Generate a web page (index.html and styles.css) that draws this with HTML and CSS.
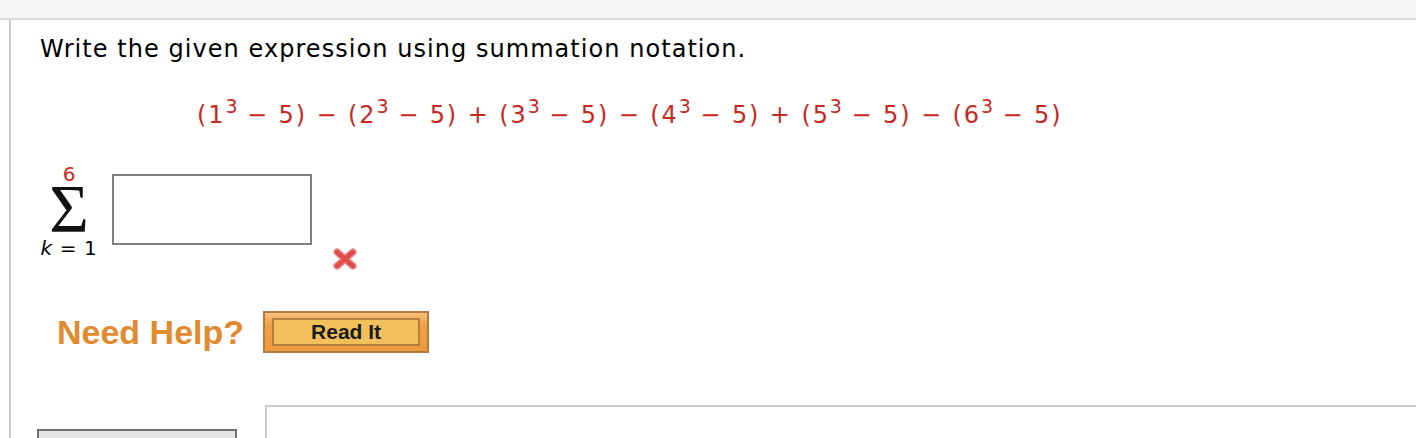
FILE: index.html
```html
<!DOCTYPE html>
<html>
<head>
<meta charset="utf-8">
<link rel="stylesheet" href="styles.css">
</head>
<body>
<div class="topbar"></div>
<div class="main">
  <p class="prompt">Write the given expression using summation notation.</p>
  <div class="expr">(1<sup>3</sup> &minus; 5) &minus; (2<sup>3</sup> &minus; 5) + (3<sup>3</sup> &minus; 5) &minus; (4<sup>3</sup> &minus; 5) + (5<sup>3</sup> &minus; 5) &minus; (6<sup>3</sup> &minus; 5)</div>
  <div class="answer-row">
    <div class="sigma">
      <span class="upper">6</span>
      <span class="sym">&Sigma;</span>
      <span class="lower"><i>k</i> = 1</span>
    </div>
    <div class="box"></div>
    <svg class="wrong" width="26" height="24" viewBox="0 0 26 24">
      <path d="M5 5 L21 19 M21 5 L5 19" stroke="#ec7b7b" stroke-width="7" stroke-linecap="round"/>
      <path d="M5 5 L21 19 M21 5 L5 19" stroke="#e04a4a" stroke-width="4" stroke-linecap="round"/>
    </svg>
  </div>
  <div class="help">
    <span class="need">Need Help?</span>
    <div class="btn"><div class="btn-inner">Read It</div></div>
  </div>
  <div class="bottom">
    <div class="graybox"></div>
    <div class="panel"></div>
  </div>
</div>
</body>
</html>
```
FILE: styles.css
```css
html, body {
  margin: 0;
  padding: 0;
  background: #ffffff;
  overflow: hidden;
}
body {
  width: 1416px;
  height: 438px;
  font-family: "DejaVu Sans", Verdana, sans-serif;
}
.topbar {
  height: 18px;
  background: #f6f6f6;
  border-bottom: 2px solid #dddddd;
}
.main {
  margin-left: 9px;
  border-left: 2px solid #cccccc;
  padding-left: 29px;
  height: 418px;
  overflow: hidden;
}
.prompt {
  margin: 0;
  padding-top: 15px;
  font-size: 24px;
  line-height: 28px;
  letter-spacing: 1.05px;
  color: #000;
  white-space: nowrap;
}
.expr {
  margin-top: 37px;
  padding-left: 157px;
  font-size: 24px;
  line-height: 30px;
  letter-spacing: 1.9px;
  color: #c8281e;
  white-space: nowrap;
}
.expr sup {
  font-size: 19px;
  line-height: 0;
  vertical-align: 10px;
  letter-spacing: 0;
}
.answer-row {
  display: flex;
  align-items: flex-start;
  margin-top: 35px;
  height: 146px;
}
.sigma {
  display: flex;
  flex-direction: column;
  align-items: center;
  width: 58px;
}
.upper {
  color: #c8281e;
  font-size: 20px;
  line-height: 18px;
  height: 18px;
}
.sym {
  font-family: "Liberation Serif", "Times New Roman", serif;
  font-size: 68px;
  line-height: 46px;
  height: 46px;
  margin-top: 2px;
  color: #111;
}
.lower {
  margin-top: 7px;
  font-size: 20px;
  line-height: 20px;
  color: #000;
  white-space: nowrap;
  letter-spacing: 0.6px;
}
.box {
  width: 196px;
  height: 67px;
  border: 2px solid #808080;
  margin-left: 14px;
  margin-top: 9px;
}
.wrong {
  margin-left: 20px;
  margin-top: 82px;
}
.help {
  display: flex;
  align-items: center;
  padding-left: 17px;
  height: 42px;
}
.need {
  font-family: "Liberation Sans", Arial, sans-serif;
  font-weight: bold;
  font-size: 34px;
  color: #e28a30;
}
.btn {
  margin-left: 19px;
  width: 162px;
  height: 38px;
  border: 2px solid #b27a3c;
  background: linear-gradient(#f7c07a, #f0a048 30%, #ec9a3c);
  display: flex;
  align-items: center;
  justify-content: center;
}
.btn-inner {
  width: 144px;
  height: 24px;
  border: 2px solid #b08040;
  background: #f2c05a;
  font-family: "Liberation Sans", Arial, sans-serif;
  font-weight: bold;
  font-size: 21px;
  line-height: 24px;
  text-align: center;
  color: #1a1a1a;
}
.bottom {
  display: flex;
  align-items: flex-start;
  margin-top: 52px;
  margin-left: -3px;
}
.graybox {
  margin-top: 24px;
  width: 196px;
  height: 40px;
  border: 2px solid #707070;
  background: #e6e6e6;
}
.panel {
  margin-left: 28px;
  flex: 1;
  height: 60px;
  border-top: 2px solid #cccccc;
  border-left: 2px solid #cccccc;
}
```
